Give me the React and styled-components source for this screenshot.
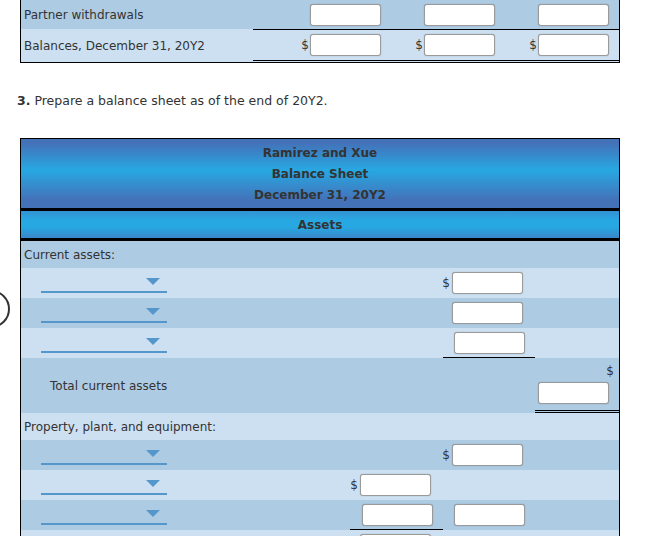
import React from "react";
import styled, { createGlobalStyle } from "styled-components";

const GlobalStyle = createGlobalStyle`
  html, body {
    margin: 0;
    padding: 0;
    background: #fff;
  }
  body {
    font-family: "DejaVu Sans", Verdana, sans-serif;
    color: #333;
    font-size: 12px;
  }
`;

const LIGHT = "#cde0f1";
const DARK = "#aecbe4";

const Page = styled.div`
  position: relative;
  width: 600px;
  padding-left: 20px;
  padding-bottom: 40px;
`;

/* ---------- equity statement (cut off at the top) ---------- */

const EquityTable = styled.div`
  border-left: 1px solid #000;
  border-right: 1px solid #000;
  width: 598px;
`;

const EqRow = styled.div`
  display: grid;
  grid-template-columns: 232px 138px 114px 114px;
  background: ${(p) => (p.$tone === "light" ? LIGHT : DARK)};
`;

const EqLabel = styled.div`
  display: flex;
  align-items: center;
  padding-left: 3px;
  height: ${(p) => (p.$last ? "auto" : "29px")};
  border-bottom: ${(p) => (p.$last ? "1px solid #000" : "none")};
`;

const EqCell = styled.div`
  display: flex;
  align-items: center;
  justify-content: flex-end;
  padding-right: 10px;
  height: ${(p) => (p.$last ? "30px" : "29px")};
  border-top: ${(p) => (p.$last ? "1px solid #000" : "none")};
  border-bottom: ${(p) => (p.$last ? "3px double #000" : "none")};
`;

/* ---------- shared inputs ---------- */

const Field = styled.span`
  display: inline-flex;
  align-items: center;
  gap: ${(p) => p.$gap ?? 2}px;
`;

const Dollar = styled.span`
  font-size: 12px;
  color: #333;
`;

const Box = styled.span`
  display: inline-block;
  width: 69px;
  height: 20px;
  background: #fff;
  border: 1px solid #9a9a9a;
  border-radius: 3px;
  box-shadow: 0 0 1px rgba(0, 0, 0, 0.35);
`;

const Amount = ({ dollar, gap }) => (
  <Field $gap={gap}>
    {dollar ? <Dollar>$</Dollar> : null}
    <Box />
  </Field>
);

/* ---------- instruction ---------- */

const Instruction = styled.p`
  margin: 30px 0 0 -3px;
  font-size: 12.5px;
  line-height: 16px;
  color: #333;
  b {
    font-weight: bold;
  }
`;

/* ---------- balance sheet ---------- */

const Sheet = styled.div`
  margin-top: 29px;
  width: 598px;
  border: 1px solid #000;
  border-bottom: none;
`;

const SheetHeader = styled.div`
  padding: 4px 0 2px;
  text-align: center;
  font-weight: bold;
  font-size: 12px;
  line-height: 21px;
  color: #333;
  background: linear-gradient(
    to bottom,
    #4472b9 0%,
    #4472b9 6%,
    #27a8e2 45%,
    #4472b9 88%,
    #4472b9 100%
  );
`;

const Rule = styled.div`
  height: 3px;
  background: #000;
`;

const SectionBar = styled.div`
  height: 27px;
  display: flex;
  align-items: center;
  justify-content: center;
  font-weight: bold;
  font-size: 12px;
  color: #333;
  background: linear-gradient(
    to bottom,
    #3592d3 0%,
    #27a8e2 35%,
    #27a8e2 60%,
    #3a86c9 100%
  );
`;

const BodyRow = styled.div`
  display: grid;
  grid-template-columns: 329px 93px 92px 84px;
  min-height: ${(p) => p.$h ?? 30}px;
  background: ${(p) => (p.$tone === "light" ? LIGHT : DARK)};
`;

const LabelCell = styled.div`
  display: flex;
  align-items: center;
  padding-left: ${(p) => p.$indent ?? 3}px;
`;

const ValueCell = styled.div`
  display: flex;
  flex-direction: column;
  align-items: flex-end;
  justify-content: center;
  padding-right: ${(p) => p.$pad ?? 12}px;
  border-bottom: ${(p) =>
    p.$rule === "single"
      ? "1px solid #000"
      : p.$rule === "double"
      ? "3px double #000"
      : "none"};
`;

const TopDollar = styled.span`
  font-size: 12px;
  margin-right: -5px;
  margin-bottom: 4px;
`;

const Select = styled.div`
  position: relative;
  margin-left: 17px;
  width: 126px;
  height: 17px;
  border-bottom: 2px solid #5596cb;
`;

const Caret = styled.span`
  position: absolute;
  right: 7px;
  top: 4px;
  width: 0;
  height: 0;
  border-left: 7px solid transparent;
  border-right: 7px solid transparent;
  border-top: 7px solid #5596cb;
`;

const Dropdown = () => (
  <Select>
    <Caret />
  </Select>
);

const Ring = styled.div`
  position: absolute;
  left: -28px;
  top: 290px;
  width: 34px;
  height: 34px;
  border: 2px solid #333;
  border-radius: 50%;
`;

const Empty = styled.div``;

export default function App() {
  return (
    <>
      <GlobalStyle />
      <Page>
        <EquityTable>
          <EqRow $tone="dark">
            <EqLabel>Partner withdrawals</EqLabel>
            <EqCell>
              <Amount />
            </EqCell>
            <EqCell>
              <Amount />
            </EqCell>
            <EqCell>
              <Amount />
            </EqCell>
          </EqRow>
          <EqRow $tone="light">
            <EqLabel $last>Balances, December 31, 20Y2</EqLabel>
            <EqCell $last>
              <Amount dollar gap={1} />
            </EqCell>
            <EqCell $last>
              <Amount dollar gap={1} />
            </EqCell>
            <EqCell $last>
              <Amount dollar gap={1} />
            </EqCell>
          </EqRow>
        </EquityTable>

        <Instruction>
          <b>3.</b> Prepare a balance sheet as of the end of 20Y2.
        </Instruction>

        <Sheet>
          <SheetHeader>
            <div>Ramirez and Xue</div>
            <div>Balance Sheet</div>
            <div>December 31, 20Y2</div>
          </SheetHeader>
          <Rule />
          <SectionBar>Assets</SectionBar>
          <Rule />

          <BodyRow $tone="dark" $h={27}>
            <LabelCell>Current assets:</LabelCell>
            <Empty />
            <Empty />
            <Empty />
          </BodyRow>
          <BodyRow $tone="light">
            <LabelCell>
              <Dropdown />
            </LabelCell>
            <Empty />
            <ValueCell>
              <Amount dollar />
            </ValueCell>
            <Empty />
          </BodyRow>
          <BodyRow $tone="dark">
            <LabelCell>
              <Dropdown />
            </LabelCell>
            <Empty />
            <ValueCell>
              <Amount />
            </ValueCell>
            <Empty />
          </BodyRow>
          <BodyRow $tone="light">
            <LabelCell>
              <Dropdown />
            </LabelCell>
            <Empty />
            <ValueCell $rule="single" $pad={10}>
              <Amount />
            </ValueCell>
            <Empty />
          </BodyRow>
          <BodyRow $tone="dark" $h={55}>
            <LabelCell $indent={29}>Total current assets</LabelCell>
            <Empty />
            <Empty />
            <ValueCell $rule="double" $pad={10}>
              <TopDollar>$</TopDollar>
              <Amount />
            </ValueCell>
          </BodyRow>

          <BodyRow $tone="light" $h={27}>
            <LabelCell>Property, plant, and equipment:</LabelCell>
            <Empty />
            <Empty />
            <Empty />
          </BodyRow>
          <BodyRow $tone="dark">
            <LabelCell>
              <Dropdown />
            </LabelCell>
            <Empty />
            <ValueCell>
              <Amount dollar />
            </ValueCell>
            <Empty />
          </BodyRow>
          <BodyRow $tone="light">
            <LabelCell>
              <Dropdown />
            </LabelCell>
            <ValueCell>
              <Amount dollar />
            </ValueCell>
            <Empty />
            <Empty />
          </BodyRow>
          <BodyRow $tone="dark">
            <LabelCell>
              <Dropdown />
            </LabelCell>
            <ValueCell $rule="single" $pad={10}>
              <Amount />
            </ValueCell>
            <ValueCell $pad={10}>
              <Amount />
            </ValueCell>
            <Empty />
          </BodyRow>
          <BodyRow $tone="light">
            <LabelCell>
              <Dropdown />
            </LabelCell>
            <ValueCell>
              <Amount />
            </ValueCell>
            <Empty />
            <Empty />
          </BodyRow>
          <BodyRow $tone="dark">
            <LabelCell>
              <Dropdown />
            </LabelCell>
            <ValueCell $rule="single" $pad={10}>
              <Amount />
            </ValueCell>
            <Empty />
            <Empty />
          </BodyRow>
        </Sheet>
        <Ring />
      </Page>
    </>
  );
}
